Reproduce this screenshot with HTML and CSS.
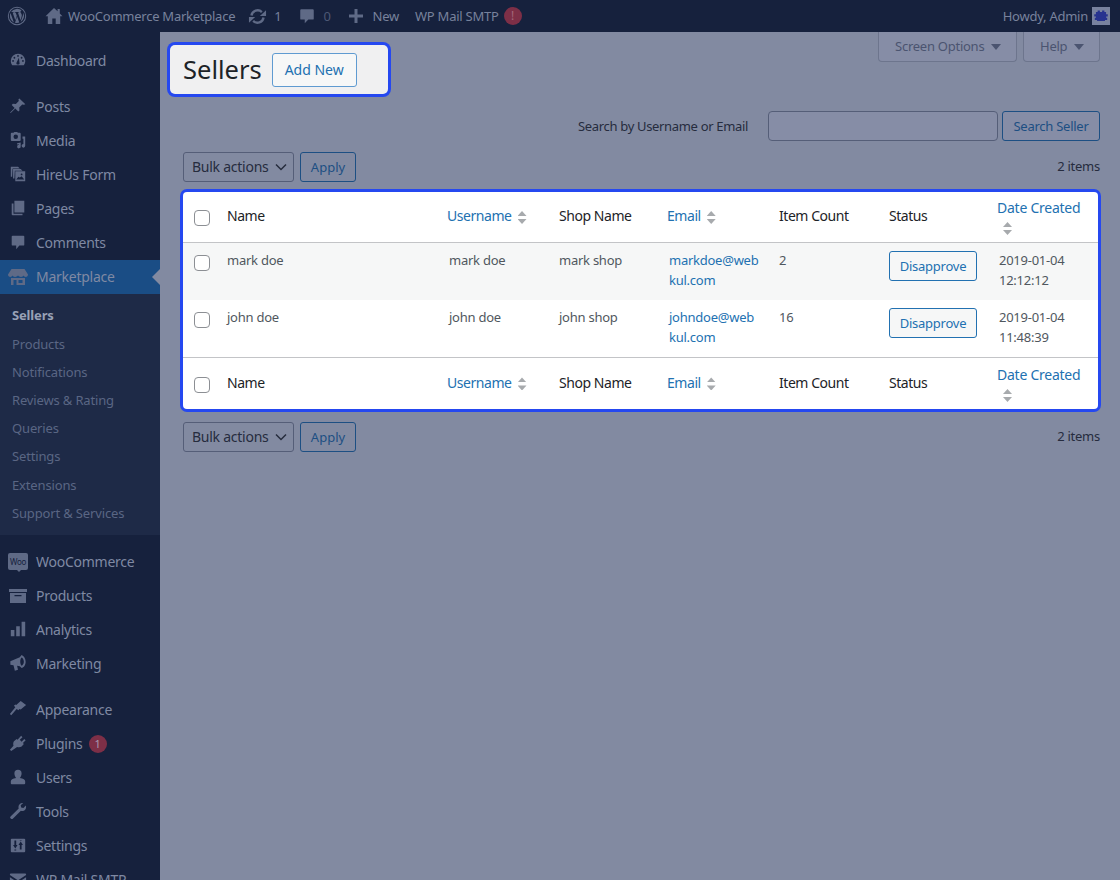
FILE: index.html
```html
<!DOCTYPE html>
<html lang="en">
<head>
<meta charset="utf-8">
<title>Sellers</title>
<link rel="stylesheet" href="styles.css">
</head>
<body>
<header class="adminbar">
  <div class="bar-left">
    <svg class="bar-wp" viewBox="0 0 20 20"><path d="M10 .8a9.2 9.2 0 1 0 0 18.4A9.2 9.2 0 0 0 10 .8zm0 1a8.2 8.2 0 1 1 0 16.4A8.2 8.2 0 0 1 10 1.800zM2.900 10c0 2.800 1.600 5.200 4 6.400L3.500 7.100C3.100 8 2.900 9 2.900 10zm11.900-.4c0-.9-.3-1.500-.6-2-.4-.6-.7-1.100-.7-1.700 0-.7.500-1.300 1.200-1.300h.1A7.100 7.100 0 0 0 4.100 6.100h.5c.7 0 1.900-.1 1.900-.1.400 0 .4.500 0 .6 0 0-.4 0-.8.100l2.600 7.600 1.500-4.500-1.100-3.100c-.4 0-.7-.1-.7-.1-.4 0-.3-.6 0-.6 0 0 1.200.1 1.900.1.700 0 1.900-.1 1.900-.1.400 0 .4.500 0 .6 0 0-.4 0-.8.100l2.500 7.500.7-2.300c.3-.9.500-1.600.5-2.200zm-4.700 1-2.100 6.100a7.100 7.100 0 0 0 4.400-.1l-.1-.1-2.200-5.900zm6.100-4c0 .2.100.5.100.7 0 .7-.1 1.500-.5 2.500l-2.200 6.200a7.100 7.100 0 0 0 2.600-9.400z"/></svg>
    <span class="bar-item bar-home"><svg class="bar-ico" viewBox="0 0 20 20"><path d="M10 2 1.500 10.200h2.300V18H8.300v-5.500h3.400V18h4.500v-7.800h2.300L15.800 7.500V3h-2.200v2.200z"/></svg>WooCommerce Marketplace</span>
    <span class="bar-item bar-sync"><svg class="bar-ico" viewBox="0 0 20 20"><path fill="none" stroke="#5f6a86" stroke-width="2.500" d="M3.600 9A6.600 6.600 0 0 1 14.600 5.300M16.400 11A6.600 6.600 0 0 1 5.400 14.700"/><path d="M19 9.500h-6.500L19 3.500zM1 10.500h6.500L1 16.500z"/></svg>1</span>
    <span class="bar-item bar-dim"><svg class="bar-ico" viewBox="0 0 20 20"><path d="M3.500 2.500h13c.6 0 1 .4 1 1v9.500c0 .6-.4 1-1 1h-5L7.500 18v-4h-4c-.6 0-1-.4-1-1V3.500c0-.6.4-1 1-1z"/></svg>0</span>
    <span class="bar-item bar-new"><svg class="bar-ico" viewBox="0 0 20 20"><path d="M8.500 3h3v5.500H17v3h-5.500V17h-3v-5.500H3v-3h5.500z"/></svg>New</span>
    <span class="bar-item bar-smtp">WP Mail SMTP<span class="bar-alert">!</span></span>
  </div>
  <div class="bar-right">Howdy, Admin
    <svg class="avatar" viewBox="0 0 16 16"><rect width="16" height="16" fill="#78829f"/><path fill="#27338f" d="M5 3h2V4.500h2V3h2V4.500h1.500v2H14v2h-1.500v1H13.500v2h-2v1h-7v-1h-2v-2h1V8.500H2v-2h1.500v-2H5z"/></svg>
  </div>
</header>
<div class="layout">
  <nav class="sidebar">
    <ul class="menu">
      <li class="menu-item"><svg class="mi" viewBox="0 0 20 20"><path fill-rule="evenodd" d="M10 3a8 8 0 0 0-8 8c0 1.800.6 3.400 1.600 4.800h12.800A8 8 0 0 0 10 3zm0 1.500a1 1 0 1 1 0 2 1 1 0 0 1 0-2zm-4 2a1 1 0 1 1 0 2 1 1 0 0 1 0-2zm8 0a1 1 0 1 1 0 2 1 1 0 0 1 0-2zm-9.500 3.500a1 1 0 1 1 0 2 1 1 0 0 1 0-2zm11 0a1 1 0 1 1 0 2 1 1 0 0 1 0-2zM11 7.500l.6 5.300a1.700 1.700 0 1 1-3.200 0z"/></svg>Dashboard</li>
      <li class="menu-sep"></li>
      <li class="menu-item"><svg class="mi" viewBox="0 0 20 20"><path d="M11.500 1.800 18.200 8l-1.700.7-1.800-.4-3.300 3.300.2 3.300-1.300 1.300-3.300-3.400-4.800 4.800-.9.200.2-.9 4.800-4.800L3 8.800l1.300-1.300 3.300.2 3.300-3.300-.4-1.800z"/></svg>Posts</li>
      <li class="menu-item"><svg class="mi" viewBox="0 0 20 20"><path fill-rule="evenodd" d="M3 2h2l1-1h3l1 1h2c.6 0 1 .4 1 1v7c0 .6-.4 1-1 1H3c-.6 0-1-.4-1-1V3c0-.6.4-1 1-1zm4.500 2a2.500 2.500 0 1 0 0 5 2.500 2.500 0 0 0 0-5zM15 6h3v10.500a2 2 0 1 1-2-2v-6h-1zM9 13.500l4-.8v4.300a2 2 0 1 1-2-1.700v-.6l-2 .4z"/></svg>Media</li>
      <li class="menu-item"><svg class="mi" viewBox="0 0 20 20"><path d="M2 2h8l2 2h-8l-.5 9H2zM4.500 4.500H13l2 2H6.500L6 15H4.500zM7 7h11v11H7zm7 2.500a1 1 0 1 0 0 2 1 1 0 0 0 0-2zM8 16h9l-3-3.500-2 1.500-1.500-1z" fill-rule="evenodd"/></svg>HireUs Form</li>
      <li class="menu-item"><svg class="mi" viewBox="0 0 20 20"><path d="M6 2h11v13H6zM3 5h2v11.500h10V18H4c-.6 0-1-.4-1-1z"/></svg>Pages</li>
      <li class="menu-item"><svg class="mi" viewBox="0 0 20 20"><path d="M4 3h12c.6 0 1 .4 1 1v9c0 .6-.4 1-1 1h-4.500L8 18v-4H4c-.6 0-1-.4-1-1V4c0-.6.4-1 1-1z"/></svg>Comments</li>
      <li class="menu-item menu-active"><svg class="mi mi-wide" viewBox="0 0 20 20"><path fill-rule="evenodd" d="M3.500 2h13L20 7.500c0 1.500-1 2.500-2.300 2.500-1 0-1.800-.6-2.200-1.400-.4.800-1.300 1.400-2.500 1.400S10.800 9.400 10 8.600C9.200 9.400 8.200 10 7 10s-2.100-.6-2.500-1.400C4.100 9.400 3.300 10 2.300 10 1 10 0 9 0 7.500zM3 11h14v7H3zm2.500 2v5h3v-5zm5 0v3h4v-3z"/></svg>Marketplace</li>
      <li class="submenu">
        <ul class="submenu-list">
          <li class="sub-item sub-current">Sellers</li>
          <li class="sub-item">Products</li>
          <li class="sub-item">Notifications</li>
          <li class="sub-item">Reviews &amp; Rating</li>
          <li class="sub-item">Queries</li>
          <li class="sub-item">Settings</li>
          <li class="sub-item">Extensions</li>
          <li class="sub-item">Support &amp; Services</li>
        </ul>
      </li>
      <li class="menu-sep-woo"></li>
      <li class="menu-item"><span class="woo-ico">Woo</span>WooCommerce</li>
      <li class="menu-item"><svg class="mi mi-wide" viewBox="0 0 20 20"><path fill-rule="evenodd" d="M1 3h18v3H1zM2 7h16v10H2zm4.500 2v1.200h7V9z"/></svg>Products</li>
      <li class="menu-item"><svg class="mi" viewBox="0 0 20 20"><path d="M2 11h4v7H2zM8 7h4v11H8zM14 2h4v16h-4z"/></svg>Analytics</li>
      <li class="menu-item"><svg class="mi" viewBox="0 0 20 20"><path fill-rule="evenodd" d="M1.500 8 12 3.500 14 1c2.500 1 4.500 4 4.500 7.500S16.500 15 14 15.500l-2-2L9 13l1 4.500-3.500 1L5 12.500l-3.500-.5zm12.500-4c-1 1-1.500 2.500-1.500 4.500s.5 3.500 1.500 4.500c1.200-.5 2.500-2.300 2.500-4.500S15.200 4.500 14 4z"/></svg>Marketing</li>
      <li class="menu-sep"></li>
      <li class="menu-item"><svg class="mi" viewBox="0 0 20 20"><path d="M13 1l6 4.500-6 5-1.500-.5-1 1.500-2-1.500-6 7-1.500-1.500 6-7.500L5.500 6.500 7 5l1 .5z"/></svg>Appearance</li>
      <li class="menu-item menu-plugins"><svg class="mi" viewBox="0 0 20 20"><path d="M13.500 2 15 3.500l-3 3 2 2 3-3 1.500 1.500-3 3 1 1-2.500 3c-1.500 1-3.500 1-5 .5L2.500 19 1 17.500l4-4.500c-.5-1.500-.5-3.500.5-5l3-2.500 1 1z"/></svg>Plugins<span class="count">1</span></li>
      <li class="menu-item"><svg class="mi" viewBox="0 0 20 20"><path d="M10 2a4 4 0 0 1 4 4c0 2-1 4-2 5 4 .5 6 2 6 4v2c0 .6-.4 1-1 1H3c-.6 0-1-.4-1-1v-2c0-2 2-3.500 6-4-1-1-2-3-2-5a4 4 0 0 1 4-4z"/></svg>Users</li>
      <li class="menu-item"><svg class="mi" viewBox="0 0 20 20"><path d="M15 1c-2.500 0-4.500 2-4.500 4.500 0 .6.100 1.100.3 1.600L2 15.800c-1 1-1 2 0 2.500.8.800 1.800.7 2.500 0l8.700-8.700c.5.200 1.200.4 1.800.4C17.500 10 19 8 19 5.500c0-.5-.1-1-.2-1.500L16 6.800 13.500 6 13 3.500 15.800 1.100A5 5 0 0 0 15 1z"/></svg>Tools</li>
      <li class="menu-item"><svg class="mi" viewBox="0 0 20 20"><path fill-rule="evenodd" d="M3 3h14c.6 0 1 .4 1 1v13c0 .6-.4 1-1 1H3c-.6 0-1-.4-1-1V4c0-.6.4-1 1-1zm3 2v5H4.500L7 14l2.500-4H8V5zm6 10h2v-5h1.500L13 6l-2.500 4H12zM6 15v1h2v-1zm6-9.500V5h2v.5z"/></svg>Settings</li>
      <li class="menu-item"><svg class="mi" viewBox="0 0 20 20"><path d="M2 4h16c.6 0 1 .4 1 1v.500l-9 6-9-6V5c0-.6.400-1 1-1zM1 8l9 6 9-6v8c0 .6-.4 1-1 1H2c-.6 0-1-.4-1-1z"/></svg>WP Mail SMTP</li>
    </ul>
  </nav>
  <main class="content">
    <div class="top-row">
      <div class="title-box">
        <h1 class="page-title">Sellers</h1>
        <a class="add-new">Add New</a>
      </div>
      <div class="meta-tabs">
        <span class="meta-tab meta-screen">Screen Options<i class="tri"></i></span>
        <span class="meta-tab meta-help">Help<i class="tri"></i></span>
      </div>
    </div>
    <form class="search-row">
      <label class="search-label">Search by Username or Email</label>
      <span class="search-input"></span>
      <span class="btn search-btn">Search Seller</span>
    </form>
    <div class="tablenav">
      <span class="select">Bulk actions<svg class="chev" viewBox="0 0 12 8"><path d="M1 1.500 6 6.500l5-5" fill="none" stroke="currentColor" stroke-width="1.500"/></svg></span>
      <span class="btn apply">Apply</span>
      <span class="items">2 items</span>
    </div>
    <div class="table-wrap">
      <table class="sellers">
        <colgroup>
          <col class="c-cb"><col class="c-name"><col class="c-std"><col class="c-std"><col class="c-std"><col class="c-std"><col class="c-std"><col class="c-date">
        </colgroup>
        <thead>
          <tr>
            <th class="cb"><span class="check"></span></th>
            <th>Name</th>
            <th class="sortable"><a>Username</a><span class="sort"><i></i><b></b></span></th>
            <th>Shop Name</th>
            <th class="sortable"><a>Email</a><span class="sort"><i></i><b></b></span></th>
            <th>Item Count</th>
            <th>Status</th>
            <th class="sortable date"><a>Date Created</a><span class="sort"><i></i><b></b></span></th>
          </tr>
        </thead>
        <tbody>
          <tr class="alt">
            <td class="cb"><span class="check"></span></td>
            <td>mark doe</td><td class="nudge">mark doe</td><td>mark shop</td>
            <td class="mail"><a>markdoe@webkul.com</a></td><td>2</td>
            <td class="st"><span class="disapprove">Disapprove</span></td>
            <td class="dt">2019-01-04 12:12:12</td>
          </tr>
          <tr>
            <td class="cb"><span class="check"></span></td>
            <td>john doe</td><td class="nudge">john doe</td><td>john shop</td>
            <td class="mail"><a>johndoe@webkul.com</a></td><td>16</td>
            <td class="st"><span class="disapprove">Disapprove</span></td>
            <td class="dt">2019-01-04 11:48:39</td>
          </tr>
        </tbody>
        <tfoot>
          <tr>
            <th class="cb"><span class="check"></span></th>
            <th>Name</th>
            <th class="sortable"><a>Username</a><span class="sort"><i></i><b></b></span></th>
            <th>Shop Name</th>
            <th class="sortable"><a>Email</a><span class="sort"><i></i><b></b></span></th>
            <th>Item Count</th>
            <th>Status</th>
            <th class="sortable date"><a>Date Created</a><span class="sort"><i></i><b></b></span></th>
          </tr>
        </tfoot>
      </table>
    </div>
    <div class="tablenav tablenav-bottom">
      <span class="select">Bulk actions<svg class="chev" viewBox="0 0 12 8"><path d="M1 1.500 6 6.500l5-5" fill="none" stroke="currentColor" stroke-width="1.500"/></svg></span>
      <span class="btn apply">Apply</span>
      <span class="items">2 items</span>
    </div>
  </main>
</div>
</body>
</html>
```
FILE: styles.css
```css
* { box-sizing: border-box; }
html, body { margin: 0; height: 880px; overflow: hidden; }
body { background: #828aa1; font: 13px/1.4 "Noto Sans", sans-serif; letter-spacing: -.25px; color: #262c3e; }
ul { list-style: none; margin: 0; padding: 0; }

.adminbar { height: 32px; background: #16213d; color: #78829c; display: flex; justify-content: space-between; align-items: center; padding: 0 10px 0 7px; }
.bar-left { display: flex; align-items: center; }
.bar-wp { width: 20px; height: 20px; fill: #5f6a86; margin-right: 17px; }
.bar-item { display: flex; align-items: center; }
.bar-ico { width: 20px; height: 20px; fill: #5f6a86; }
.bar-home { margin-right: 13px; }
.bar-home .bar-ico { margin-right: 4px; }
.bar-sync { margin-right: 17px; }
.bar-sync .bar-ico { width: 19px; height: 19px; margin-right: 7px; }
.bar-dim { color: #4d5875; margin-right: 15px; }
.bar-dim .bar-ico { width: 18px; height: 18px; margin-right: 7px; }
.bar-new { margin-right: 16px; }
.bar-new .bar-ico { margin-right: 7px; }
.bar-alert { width: 18px; height: 18px; border-radius: 50%; background: #7d2f47; color: #a3677b; font-size: 12px; line-height: 18px; text-align: center; margin-left: 5px; }
.bar-right { display: flex; align-items: center; gap: 4px; }
.avatar { width: 18px; height: 18px; }

.layout { display: flex; height: 848px; }
.sidebar { width: 160px; flex: none; background: #16213d; padding-top: 12px; }
.menu-item { height: 34px; display: flex; align-items: center; padding: 0 0 1px 36px; position: relative; font-size: 14px; color: #7f89a3; }
.mi { position: absolute; left: 9px; top: 7px; width: 18px; height: 18px; fill: #5f6a86; }
.mi-wide { left: 8px; width: 20px; height: 20px; }
.menu-sep { height: 12px; }
.menu-sep-woo { height: 10px; }
.menu-active { background: #1a4d85; }
.menu-active::after { content: ""; position: absolute; right: 0; top: 9px; border: 8px solid transparent; border-right-color: #828aa1; border-left: 0; }
.submenu-list { background: #1e2a47; padding-top: 7.500px; height: 241px; }
.sub-item { height: 28.200px; line-height: 28px; padding-left: 12px; color: #5a6684; letter-spacing: -.15px; }
.sub-current { color: #98a1b6; font-weight: 700; line-height: 26px; }
.woo-ico { position: absolute; left: 8px; top: 8px; width: 20px; height: 17px; border-radius: 2px; background: #5f6a86; color: #16213d; font-size: 8px; line-height: 17px; text-align: center; }
.woo-ico::after { content: ""; position: absolute; left: 9px; bottom: -2px; border: 2px solid transparent; border-top-color: #5f6a86; border-bottom: 0; }
.count { width: 18px; height: 18px; border-radius: 50%; background: #7d2f47; color: #a79ab0; font-size: 11px; line-height: 18px; text-align: center; margin-left: 6px; }

.content { flex: 1; min-width: 0; padding: 0 20px 0 23px; }
.top-row { display: flex; justify-content: space-between; align-items: flex-start; height: 79px; }
.title-box { width: 218px; height: 49px; margin: 13px 0 0 -13px; padding-left: 13px; background: #f0f0f1; box-shadow: 0 0 0 3px #2548f0; border-radius: 5px; display: flex; align-items: center; gap: 10px; }
.page-title { margin: 0; font-size: 25.500px; line-height: 1.3; font-weight: 400; color: #1d2327; letter-spacing: 0; }
.add-new { height: 34px; width: 85px; border: 1px solid #5f9bd1; border-radius: 3px; background: #f6f7f7; color: #2271b1; font-size: 14px; line-height: 32px; text-align: center; letter-spacing: 0; }
.meta-tabs { display: flex; gap: 6px; }
.meta-tab { height: 30px; border: 1px solid #6d758d; border-top: 0; border-radius: 0 0 4px 4px; background: #868da6; color: #4b5470; padding: 0 0 0 16px; display: flex; align-items: center; }
.meta-screen { width: 139px; }
.meta-help { width: 77px; }
.tri { width: 0; height: 0; margin-left: 7px; border: 5px solid transparent; border-top: 6px solid #4b5470; border-bottom: 0; }

.search-row { display: flex; align-items: center; height: 30px; justify-content: flex-end; }
.search-label { margin-right: 20px; color: #262c3e; padding-top: 1px; letter-spacing: -.33px; }
.search-input { width: 230px; height: 30px; border: 1px solid #555e78; border-radius: 4px; background: #868da6; margin-right: 4px; }
.btn { height: 30px; border: 1px solid #1d4f83; border-radius: 3px; color: #1d4f83; line-height: 28px; text-align: center; }
.search-btn { width: 98px; background: #868da6; line-height: 29px; }

.tablenav { display: flex; align-items: center; height: 30px; margin-top: 11px; }
.tablenav-bottom { margin-top: 13px; }
.select { width: 111px; height: 30px; border: 1px solid #555e78; border-radius: 3px; padding-left: 8px; display: flex; align-items: center; font-size: 14px; color: #262c3e; }
.chev { width: 12px; height: 8px; margin-left: 6px; }
.apply { width: 56px; margin-left: 6px; letter-spacing: 0; }
.items { margin-left: auto; color: #262c3e; padding-bottom: 1px; }

.table-wrap { margin: 10px 2px 0 0; background: #fff; box-shadow: 0 0 0 3px #2548f0; border-radius: 4px; }
.sellers { width: 100%; border-collapse: separate; border-spacing: 0; table-layout: fixed; color: #50575e; }
.c-cb { width: 34px; }
.c-name { width: 222px; }
.c-std { width: 110px; }
.sellers th { font-weight: 400; font-size: 14px; color: #1d2327; text-align: left; padding: 0 10px; letter-spacing: -.45px; }
.sellers thead th { height: 51px; padding-bottom: 2px; border-bottom: 1px solid #c3c4c7; }
.sellers tfoot th { height: 52px; padding-bottom: 2px; border-top: 1px solid #c3c4c7; }
.sellers td { height: 57px; padding: 7px 10px; vertical-align: top; line-height: 20px; }
.sellers .cb { padding: 0 0 0 11px; }
.sellers thead .cb { padding-top: 2px; padding-bottom: 0; }
.sellers tfoot .cb { padding-top: 2px; padding-bottom: 0; }
.sellers td.cb { padding-top: 12px; }
.sellers td.st { padding-top: 8px; }
.alt td { background: #f6f7f7; }
.check { display: block; width: 16px; height: 16px; border: 1px solid #8c8f94; border-radius: 4px; background: #fff; }
.sellers a { color: #2271b1; }
.sellers .sortable { padding-left: 8px; }
.sort { display: inline-flex; flex-direction: column; gap: 3px; margin-left: 6px; vertical-align: middle; }
.sort i, .sort b { display: block; width: 9px; height: 5px; background: #a7aaad; }
.sort i { clip-path: polygon(50% 0, 100% 100%, 0 100%); }
.sort b { clip-path: polygon(0 0, 100% 0, 50% 100%); }
.sellers .date { line-height: 20px; padding-right: 0; vertical-align: top; padding-top: 6px; letter-spacing: -.25px; }
.sellers tfoot .date { padding-top: 7px; }
.date a { display: block; }
.date .sort { margin: 4px 0 0 6px; display: flex; width: 9px; }
.mail { word-break: break-all; }
.disapprove { display: block; width: 88px; height: 30px; border: 1px solid #2271b1; border-radius: 3px; background: #f6f7f7; color: #2271b1; line-height: 28px; text-align: center; }
```
